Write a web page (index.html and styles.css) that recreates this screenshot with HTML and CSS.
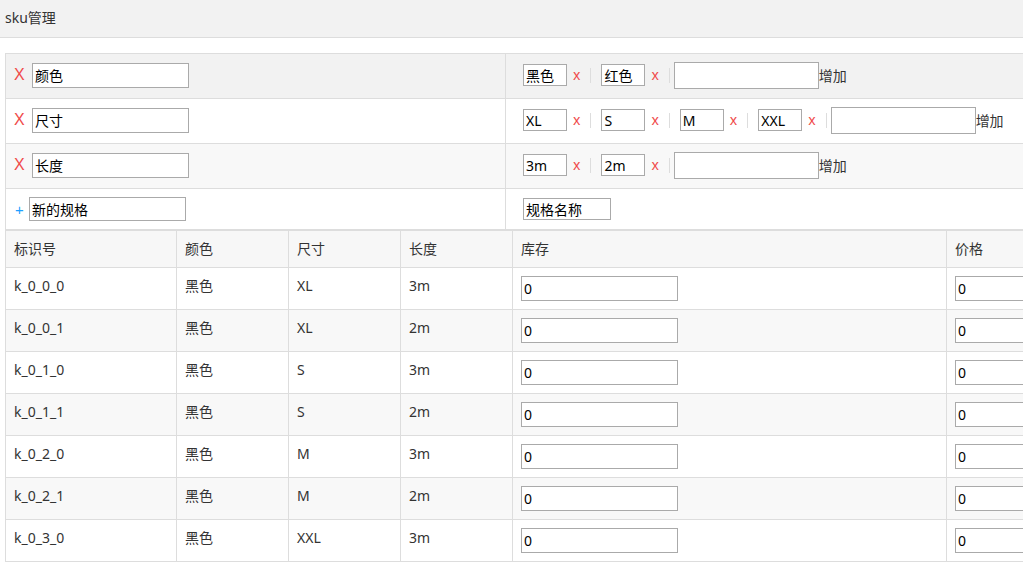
FILE: index.html
```html
<!DOCTYPE html>
<html lang="zh">
<head>
<meta charset="utf-8">
<title>sku管理</title>
<link rel="stylesheet" href="styles.css">
</head>
<body>
<div class="topbar">sku管理</div>
<div class="main">
  <table class="spec">
    <colgroup><col class="c-name"><col class="c-vals"></colgroup>
    <tr class="r-hover">
      <td class="name"><span class="rm">X</span><input class="spec-name" value="颜色"></td>
      <td class="vals"><div class="vlist">
        <span class="item"><input class="val" value="黑色"><span class="del">x</span></span>
        <span class="item"><input class="val" value="红色"><span class="del">x</span></span>
        <input class="newval"><span class="add">增加</span>
      </div></td>
    </tr>
    <tr>
      <td class="name"><span class="rm">X</span><input class="spec-name" value="尺寸"></td>
      <td class="vals"><div class="vlist">
        <span class="item"><input class="val" value="XL"><span class="del">x</span></span>
        <span class="item"><input class="val" value="S"><span class="del">x</span></span>
        <span class="item"><input class="val" value="M"><span class="del">x</span></span>
        <span class="item"><input class="val" value="XXL"><span class="del">x</span></span>
        <input class="newval"><span class="add">增加</span>
      </div></td>
    </tr>
    <tr class="r-alt">
      <td class="name"><span class="rm">X</span><input class="spec-name" value="长度"></td>
      <td class="vals"><div class="vlist">
        <span class="item"><input class="val" value="3m"><span class="del">x</span></span>
        <span class="item"><input class="val" value="2m"><span class="del">x</span></span>
        <input class="newval"><span class="add">增加</span>
      </div></td>
    </tr>
    <tr class="r-new">
      <td class="name"><span class="plus">+</span><input class="spec-new" value="新的规格"></td>
      <td class="vals"><div class="vlist"><input class="val-new" value="规格名称"></div></td>
    </tr>
  </table>
  <table class="grid">
    <colgroup>
      <col class="g1"><col class="g2"><col class="g3"><col class="g4"><col class="g5"><col class="g6">
    </colgroup>
    <thead>
      <tr><th>标识号</th><th>颜色</th><th>尺寸</th><th>长度</th><th>库存</th><th>价格</th></tr>
    </thead>
    <tbody>
      <tr><td>k_0_0_0</td><td>黑色</td><td>XL</td><td>3m</td><td><input class="num" value="0"></td><td><input class="num" value="0"></td></tr>
      <tr><td>k_0_0_1</td><td>黑色</td><td>XL</td><td>2m</td><td><input class="num" value="0"></td><td><input class="num" value="0"></td></tr>
      <tr><td>k_0_1_0</td><td>黑色</td><td>S</td><td>3m</td><td><input class="num" value="0"></td><td><input class="num" value="0"></td></tr>
      <tr><td>k_0_1_1</td><td>黑色</td><td>S</td><td>2m</td><td><input class="num" value="0"></td><td><input class="num" value="0"></td></tr>
      <tr><td>k_0_2_0</td><td>黑色</td><td>M</td><td>3m</td><td><input class="num" value="0"></td><td><input class="num" value="0"></td></tr>
      <tr><td>k_0_2_1</td><td>黑色</td><td>M</td><td>2m</td><td><input class="num" value="0"></td><td><input class="num" value="0"></td></tr>
      <tr><td>k_0_3_0</td><td>黑色</td><td>XXL</td><td>3m</td><td><input class="num" value="0"></td><td><input class="num" value="0"></td></tr>
    </tbody>
  </table>
</div>
</body>
</html>
```
FILE: styles.css
```css
html, body {
  overflow: hidden;
}
body {
  margin: 0;
  font-family: "Noto Sans", "Noto Sans CJK SC", sans-serif;
  font-size: 14px;
  color: #333;
}
input {
  font-family: "Noto Sans", "Noto Sans CJK SC", sans-serif;
  font-size: 14px;
  color: #000;
  background: #fff;
  border: 1px solid #aaa;
  box-sizing: border-box;
  padding: 0 2px;
  margin: 0;
  outline: none;
}
.topbar {
  height: 37px;
  line-height: 36px;
  padding-left: 5px;
  background: #f2f2f2;
  border-bottom: 1px solid #ddd;
}
.main {
  padding: 15px 0 0 5px;
  width: 1300px;
}
.spec {
  border-collapse: collapse;
  table-layout: fixed;
  width: 1250px;
}
.spec .c-name { width: 500px; }
.spec td {
  border: 1px solid #ddd;
  padding: 7px 8px 9px;
  height: 28px;
  vertical-align: middle;
}
.spec .r-new td { height: 24px; padding: 8px; }
.spec .r-hover { background: #f2f2f2; }
.spec .r-alt { background: #f8f8f8; }
.rm {
  display: inline-block;
  color: #f04a4a;
  font-family: "Liberation Sans", sans-serif;
  font-size: 16px;
  width: 10px;
  margin-right: 8px;
  vertical-align: middle;
}
.plus {
  display: inline-block;
  color: #1e9fff;
  font-family: "Liberation Sans", sans-serif;
  font-size: 15px;
  width: 9px;
  margin: 0 5px 0 1px;
  vertical-align: middle;
}
.spec-name {
  width: 157px;
  height: 25px;
  vertical-align: middle;
}
.spec-new {
  width: 157px;
  height: 24px;
  vertical-align: middle;
}
.vals { padding-left: 17px !important; }
.vlist {
  display: flex;
  align-items: center;
}
.item {
  display: flex;
  align-items: center;
}
.item + .item { margin-left: 6px; }
.val {
  width: 44px;
  height: 22px;
}
.del {
  color: #f04a4a;
  margin-left: 6px;
  padding-right: 10px;
  margin-right: 4px;
  border-right: 1px solid #ddd;
  line-height: 14px;
  height: 15px;
}
.newval {
  width: 145px;
  height: 27px;
}
.add {
  color: #333;
}
.val-new {
  width: 88px;
  height: 22px;
}
.grid {
  border-collapse: collapse;
  table-layout: fixed;
  width: 1250px;
}
.grid .g1 { width: 171px; }
.grid .g2, .grid .g3, .grid .g4 { width: 112px; }
.grid .g5 { width: 434px; }
.grid th, .grid td {
  border: 1px solid #ddd;
  padding: 8px;
  line-height: 20px;
  vertical-align: top;
  text-align: left;
  font-weight: normal;
}
.grid thead tr { background: #f7f7f7; }
.grid tbody tr:nth-child(even) { background: #f8f8f8; }
.num {
  width: 157px;
  height: 25px;
  display: block;
}
```
